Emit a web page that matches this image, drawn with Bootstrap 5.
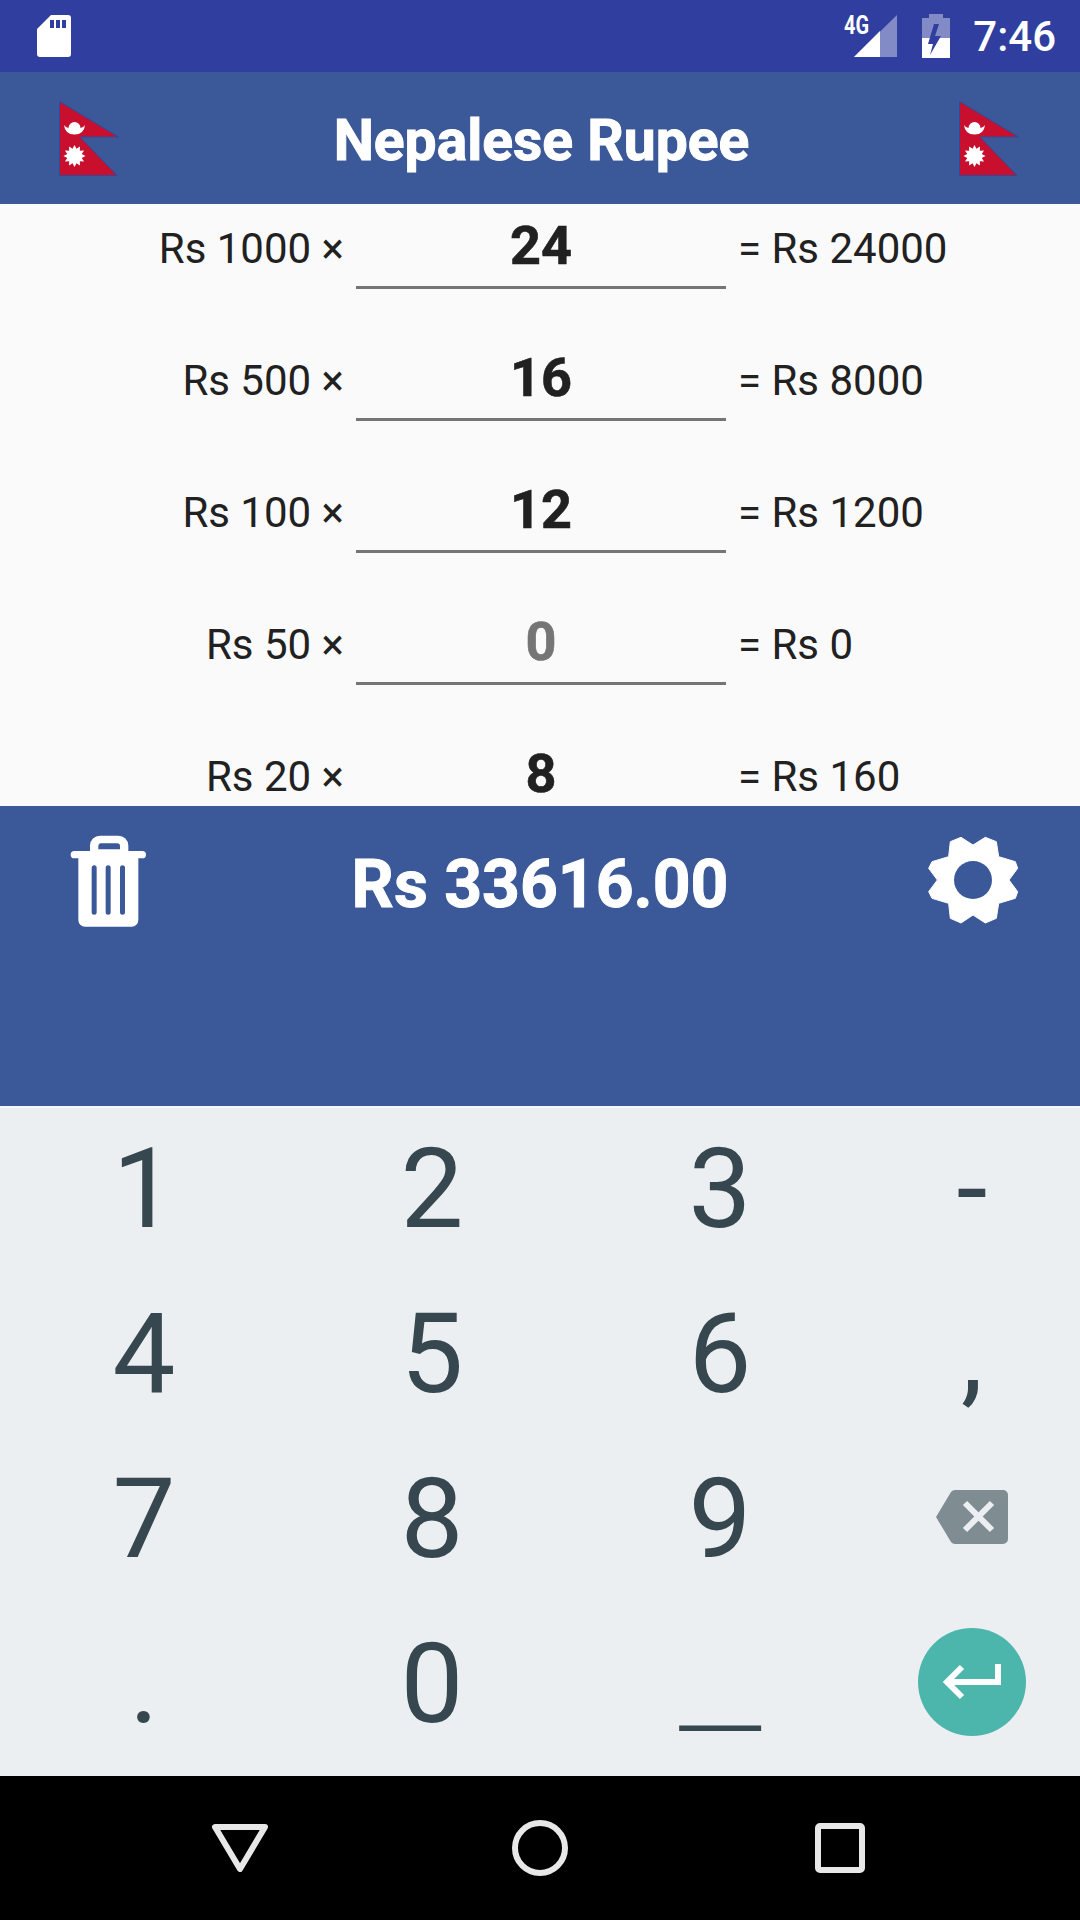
<!DOCTYPE html>
<html lang="en">
<head>
<meta charset="utf-8">
<link href="https://cdn.jsdelivr.net/npm/bootstrap@5.3.0/dist/css/bootstrap.min.css" rel="stylesheet">
<style>
html,body{margin:0;background:#000;}
body{font-family:Roboto,"Liberation Sans",sans-serif;width:1080px;height:1920px;overflow:hidden;}
.stat-bar{height:72px;background:#303f9f;color:#fff;padding:0 24px 0 37px;}
.stat-time{font-size:42px;font-weight:500;line-height:1;margin-left:22px;margin-top:2px;}
.app-head{height:132px;background:#3b5998;color:#fff;padding:0 61px 0 59px;display:grid;grid-template-columns:1fr auto 1fr;align-items:center;}
.app-title{font-size:57px;font-weight:700;line-height:1;padding-top:5px;margin-left:5px;-webkit-text-stroke:1px #fff;}
.head-end{justify-self:end;}
.note-list{height:602px;background:#fafafa;overflow:hidden;}
.note-row{display:grid;grid-template-columns:356px 370px 1fr;height:132px;font-size:42px;color:#212121;}
.note-label{padding-right:12px;text-align:right;line-height:90px;}
.note-input{height:85px;border-bottom:3px solid #757575;text-align:center;font-size:54px;font-weight:700;line-height:84px;-webkit-text-stroke:.6px currentColor;}
.note-zero{color:#757575;}
.note-sum{padding-left:12px;line-height:90px;}
.total-band{height:300px;background:#3b5998;color:#fff;padding:29px 61px 0 70px;display:grid;grid-template-columns:1fr auto 1fr;align-items:start;}
.total-text{font-size:66px;font-weight:700;line-height:1;padding-top:17px;margin-right:9px;-webkit-text-stroke:1px #fff;}
.key-pad{height:670px;background:#eceff1;border-top:2px solid #f5f7f8;display:grid;grid-template-columns:288px 288px 288px 216px;grid-auto-rows:165px;color:#37474f;}
.pad-key{font-size:112px;font-weight:400;line-height:1;display:flex;align-items:center;justify-content:center;padding-bottom:4px;}
.pad-icon{padding-bottom:8px;}
.pad-under{padding-top:6px;font-weight:300;}
.under-glyph{display:block;transform:scaleX(1.7);}
.enter-disc{width:108px;height:108px;border-radius:50%;background:#4db6ac;}
.sys-nav{height:144px;background:#000;padding:0 90px;display:grid;grid-template-columns:repeat(3,300px);align-items:center;justify-items:center;}
</style>
</head>
<body>
<div class="stat-bar d-flex align-items-center">
  <svg width="34" height="42" viewBox="0 0 34 42"><path fill="#fff" d="M14 0h17a3 3 0 0 1 3 3v36a3 3 0 0 1-3 3H3a3 3 0 0 1-3-3V14z"/><path fill="#303f9f" d="M13 5h4v8h-4zM19 5h4v8h-4zM25 5h4v8h-4z"/></svg>
  <div class="ms-auto d-flex align-items-center">
    <svg width="53" height="52" viewBox="0 -4 53 52"><text x="0" y="20" fill="#fff" font-family="Roboto,sans-serif" font-size="25" font-weight="700" textLength="25" lengthAdjust="spacingAndGlyphs">4G</text><path fill="#fff" fill-opacity=".4" d="M53 1v42H10z"/><path fill="#fff" d="M36 17v26H10z"/></svg>
    <svg class="ms-4" width="30" height="44" viewBox="0 0 30 44"><path fill="#fff" fill-opacity=".4" d="M8 0h14v4h7v22H1V4h7z"/><path fill="#fff" d="M1 24h28v20H1z"/><path fill="#303f9f" d="M18 10h-5l-6 20h5l-3 11 11-19h-6z"/></svg>
    <span class="stat-time">7:46</span>
  </div>
</div>
<header class="app-head">
  <svg width="60" height="75" viewBox="0 0 60 75"><symbol id="npflag" viewBox="0 0 60 75"><path fill="#c8102e" stroke="#2f4a9a" stroke-width="1" d="M.5.5 59.500 36H21l37 38.500H.5z"/><path fill="#fff" d="M5 24Q7 27 9.500 27A6 6 0 0 1 21.500 27Q24 27 26 24Q25 33.500 15.500 33.500Q6 33.500 5 24z"/><polygon fill="#fff" points="26.500,55 22.740,56.940 25.030,60.500 20.800,60.300 21,64.530 17.440,62.240 15.500,66 13.560,62.240 10,64.530 10.200,60.300 5.970,60.500 8.260,56.940 4.500,55 8.260,53.060 5.970,49.500 10.200,49.700 10,45.470 13.560,47.760 15.500,44 17.440,47.760 21,45.470 20.800,49.700 25.030,49.500 22.740,53.060"/></symbol><use href="#npflag"/></svg>
  <div class="app-title">Nepalese Rupee</div>
  <svg class="head-end" width="60" height="75" viewBox="0 0 60 75"><use href="#npflag"/></svg>
</header>
<main class="note-list">
  <div class="note-row"><div class="note-label">Rs 1000 ×</div><div class="note-input">24</div><div class="note-sum">= Rs 24000</div></div>
  <div class="note-row"><div class="note-label">Rs 500 ×</div><div class="note-input">16</div><div class="note-sum">= Rs 8000</div></div>
  <div class="note-row"><div class="note-label">Rs 100 ×</div><div class="note-input">12</div><div class="note-sum">= Rs 1200</div></div>
  <div class="note-row"><div class="note-label">Rs 50 ×</div><div class="note-input note-zero">0</div><div class="note-sum">= Rs 0</div></div>
  <div class="note-row"><div class="note-label">Rs 20 ×</div><div class="note-input">8</div><div class="note-sum">= Rs 160</div></div>
</main>
<section class="total-band">
  <svg width="77" height="93" viewBox="30 30 231 279"><path fill="#fff" d="M90 78V62a30 30 0 0 1 30-30h55a30 30 0 0 1 30 30v16h42a11 11 0 0 1 0 22h-12v185a20 20 0 0 1-20 20H75a20 20 0 0 1-20-20V100H43a11 11 0 0 1 0-22z"/><path fill="#3b5998" d="M122 55h50a8 8 0 0 1 8 8v10h-65V63a8 8 0 0 1 7-8zM95 128a7.500 7.500 0 0 1 15 0v134a7.500 7.500 0 0 1-15 0zM137 128a7.500 7.500 0 0 1 15 0v134a7.500 7.500 0 0 1-15 0zM180 128a7.500 7.500 0 0 1 15 0v134a7.500 7.500 0 0 1-15 0z"/></svg>
  <div class="total-text">Rs 33616.00</div>
  <svg class="head-end" width="92" height="90" viewBox="20 30 276 270"><path fill="#fff" stroke="#fff" stroke-width="3" stroke-linejoin="round" d="M122 37 158 60 195 37 228 50 235 95 285 110 292 130 266 165 292 200 285 220 235 235 228 280 195 294 158 270 122 294 90 280 85 235 35 220 25 200 51 165 25 130 35 110 85 95 90 50z"/><circle cx="158" cy="165" r="57" fill="#3b5998"/></svg>
</section>
<section class="key-pad">
  <div class="pad-key">1</div><div class="pad-key">2</div><div class="pad-key">3</div><div class="pad-key">-</div>
  <div class="pad-key">4</div><div class="pad-key">5</div><div class="pad-key">6</div><div class="pad-key">,</div>
  <div class="pad-key">7</div><div class="pad-key">8</div><div class="pad-key">9</div>
  <div class="pad-key pad-icon"><svg width="72" height="54" viewBox="0 0 72 54"><path fill="#7f8c92" d="M15 2a5 5 0 0 1 4-2h48a5 5 0 0 1 5 5v44a5 5 0 0 1-5 5H19a5 5 0 0 1-4-2L0 27z"/><path stroke="#eceff1" stroke-width="6" d="M29 13l27 27M56 13 29 40"/></svg></div>
  <div class="pad-key">.</div><div class="pad-key">0</div><div class="pad-key pad-under"><span class="under-glyph">_</span></div>
  <div class="pad-key pad-icon"><div class="enter-disc d-flex align-items-center justify-content-center"><svg width="58" height="36" viewBox="0 0 58 36"><path fill="none" stroke="#fff" stroke-width="6" d="M55 0v18H5M19 3 4 18l15 15"/></svg></div></div>
</section>
<nav class="sys-nav">
  <svg width="56" height="48" viewBox="0 0 56 48"><path fill="none" stroke="#e8e8e8" stroke-width="6" stroke-linejoin="round" d="M3 3h50L28 45z"/></svg>
  <svg width="56" height="56" viewBox="0 0 56 56"><circle cx="28" cy="28" r="25" fill="none" stroke="#e8e8e8" stroke-width="6"/></svg>
  <svg width="50" height="50" viewBox="0 0 50 50"><rect x="3" y="3" width="44" height="44" rx="2" fill="none" stroke="#e8e8e8" stroke-width="6"/></svg>
</nav>
</body>
</html>
